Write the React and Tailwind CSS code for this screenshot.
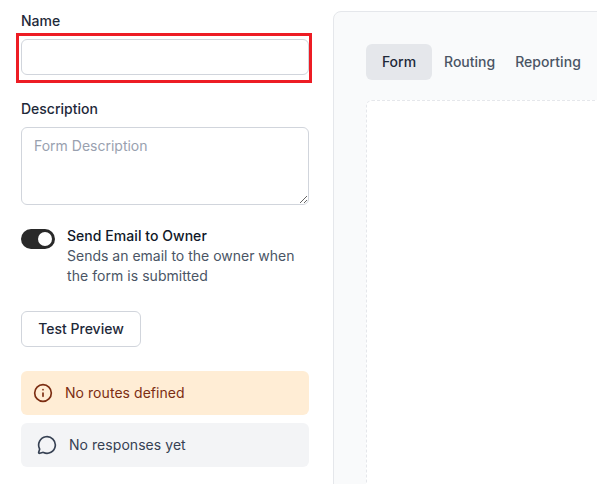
import { Info, MessageCircle } from "lucide-react";

export default function App() {
    return (
        <div className="flex h-[484px] w-[597px] overflow-hidden bg-white pt-[11px] font-['Inter',sans-serif] text-sm text-gray-900">
            <div className="flex w-[333px] shrink-0 flex-col pl-[21px] pr-6">
                <div className="relative flex flex-col gap-2">
                    <label className="font-[450] leading-5 text-gray-800">Name</label>
                    <input
                        type="text"
                        className="h-9 w-full rounded-md border border-gray-300 bg-white px-3 outline-none"
                    />
                    <div className="absolute left-[-5px] top-[22px] h-[50px] w-[296px] border-[3px] border-[#ed1c24]" />
                </div>

                <div className="mt-6 flex flex-col gap-2">
                    <label className="font-[450] leading-5 text-gray-800">Description</label>
                    <textarea
                        placeholder="Form Description"
                        className="block h-[78px] w-full rounded-md border border-gray-300 bg-white px-3 py-2 leading-5 outline-none placeholder:text-gray-400"
                    />
                </div>

                <div className="mt-[21px] flex items-start gap-3">
                    <div className="mt-[3px] flex h-5 w-[34px] shrink-0 items-center justify-end rounded-full bg-[#292929] pr-[3px]">
                        <div className="h-[14px] w-[14px] rounded-full bg-white" />
                    </div>
                    <div className="flex flex-col leading-5">
                        <span className="font-[550] tracking-[0.05px] text-gray-900">Send Email to Owner</span>
                        <span className="text-gray-600">
                            Sends an email to the owner when{" "}
                            <span className="tracking-[0.05px]">the form is submitted</span>
                        </span>
                    </div>
                </div>

                <button
                    type="button"
                    className="mt-[25px] h-9 w-[120px] rounded-md border border-gray-300 bg-white font-[450] text-gray-800"
                >
                    Test Preview
                </button>

                <div className="mt-6 flex h-11 items-center gap-3 rounded-md bg-[#ffedd5] pl-3 text-[#7c2d12]">
                    <Info size={20} strokeWidth={2} />
                    <span className="tracking-[0.05px]">No routes defined</span>
                </div>
                <div className="mt-2 flex h-11 items-center gap-3 rounded-md bg-gray-100 pl-4 text-gray-700">
                    <MessageCircle size={20} strokeWidth={2} />
                    <span className="tracking-[0.05px]">No responses yet</span>
                </div>
            </div>

            <div className="h-[600px] min-w-0 flex-1">
                <div className="h-full w-[400px] rounded-tl-lg border border-gray-200 bg-gray-50 pl-8 pt-8">
                    <div className="flex gap-1">
                        <div className="flex h-9 w-[66px] items-center justify-center rounded-md bg-gray-200 font-[450] text-gray-800">
                            Form
                        </div>
                        <div className="flex h-9 items-center px-2 font-[450] text-gray-600">Routing</div>
                        <div className="flex h-9 items-center px-2 font-[450] tracking-[0.05px] text-gray-600">Reporting</div>
                    </div>
                    <div className="mt-5 h-[500px] rounded-md border border-dashed border-gray-200 bg-white" />
                </div>
            </div>
        </div>
    );
}
